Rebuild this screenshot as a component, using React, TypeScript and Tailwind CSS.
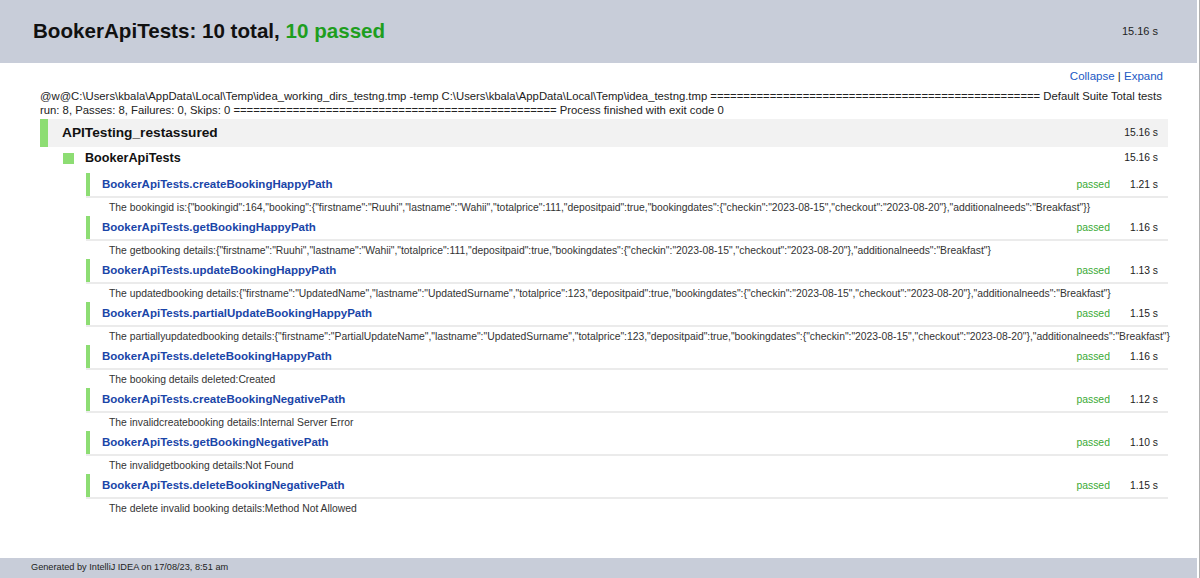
const tests = [
  {
    name: "BookerApiTests.createBookingHappyPath",
    time: "1.21 s",
    msg: 'The bookingid is:{"bookingid":164,"booking":{"firstname":"Ruuhi","lastname":"Wahii","totalprice":111,"depositpaid":true,"bookingdates":{"checkin":"2023-08-15","checkout":"2023-08-20"},"additionalneeds":"Breakfast"}}',
  },
  {
    name: "BookerApiTests.getBookingHappyPath",
    time: "1.16 s",
    msg: 'The getbooking details:{"firstname":"Ruuhi","lastname":"Wahii","totalprice":111,"depositpaid":true,"bookingdates":{"checkin":"2023-08-15","checkout":"2023-08-20"},"additionalneeds":"Breakfast"}',
  },
  {
    name: "BookerApiTests.updateBookingHappyPath",
    time: "1.13 s",
    msg: 'The updatedbooking details:{"firstname":"UpdatedName","lastname":"UpdatedSurname","totalprice":123,"depositpaid":true,"bookingdates":{"checkin":"2023-08-15","checkout":"2023-08-20"},"additionalneeds":"Breakfast"}',
  },
  {
    name: "BookerApiTests.partialUpdateBookingHappyPath",
    time: "1.15 s",
    msg: 'The partiallyupdatedbooking details:{"firstname":"PartialUpdateName","lastname":"UpdatedSurname","totalprice":123,"depositpaid":true,"bookingdates":{"checkin":"2023-08-15","checkout":"2023-08-20"},"additionalneeds":"Breakfast"}',
  },
  {
    name: "BookerApiTests.deleteBookingHappyPath",
    time: "1.16 s",
    msg: "The booking details deleted:Created",
  },
  {
    name: "BookerApiTests.createBookingNegativePath",
    time: "1.12 s",
    msg: "The invalidcreatebooking details:Internal Server Error",
  },
  {
    name: "BookerApiTests.getBookingNegativePath",
    time: "1.10 s",
    msg: "The invalidgetbooking details:Not Found",
  },
  {
    name: "BookerApiTests.deleteBookingNegativePath",
    time: "1.15 s",
    msg: "The delete invalid booking details:Method Not Allowed",
  },
];

function TestRow({ name, time, msg }: { name: string; time: string; msg: string }) {
  return (
    <div>
      <div className="flex h-[25px] items-stretch border-b-2 border-[#ebebeb]">
        <div className="w-[4px] bg-[#8ddd73]" />
        <span className="ml-[12px] self-center text-[11.5px] font-bold text-[#1a45a8]">{name}</span>
        <span className="ml-auto self-center text-[10.4px] text-[#3aaa35]">passed</span>
        <span className="ml-[20px] mr-[10px] self-center text-[10.3px] text-[#222]">{time}</span>
      </div>
      <div className="h-[18px] whitespace-nowrap pl-[23px] pt-[3px] text-[10.35px] leading-[14px] text-[#333]">
        {msg}
      </div>
    </div>
  );
}

export default function App() {
  return (
    <div
      className="flex h-[578px] w-[1200px] overflow-hidden bg-white text-[#222]"
      style={{ fontFamily: '"Liberation Sans", Arial, sans-serif' }}
    >
      <div className="flex w-[1197px] flex-col">
        <header className="flex h-[63px] shrink-0 items-center justify-between bg-[#c8cdd9] pl-[33px] pr-[39px]">
          <h1 className="text-[20.6px] font-bold text-[#111]">
            BookerApiTests: 10 total, <span className="text-[#1e9e1e]">10 passed</span>
          </h1>
          <span className="text-[11px] text-[#222]">15.16 s</span>
        </header>

        <main className="flex-1 pl-[40px] pr-[29px]">
          <div className="mt-[5px] h-[16px] pr-[5px] text-right text-[11.5px] leading-[16px] text-[#2159c4]">
            Collapse <span className="text-[#222]">|</span> Expand
          </div>
          <p className="mt-[5px] text-[11.3px] leading-[14px] text-[#222]">
            @w@C:\Users\kbala\AppData\Local\Temp\idea_working_dirs_testng.tmp -temp C:\Users\kbala\AppData\Local\Temp\idea_testng.tmp ================================================== Default Suite Total tests run: 8, Passes: 8, Failures: 0, Skips: 0 ================================================= Process finished with exit code 0
          </p>

          <div className="mt-[2px] flex h-[28px] items-stretch bg-[#f2f2f2]">
            <div className="w-[8px] bg-[#8ddd73]" />
            <span className="ml-[14px] self-center text-[13.7px] font-bold text-[#111]">APITesting_restassured</span>
            <span className="ml-auto mr-[10px] self-center text-[10.3px]">15.16 s</span>
          </div>

          <div className="flex h-[22px] items-center">
            <div className="ml-[23px] h-[11px] w-[11px] bg-[#8ddd73]" />
            <span className="ml-[11px] text-[12.6px] font-bold text-[#111]">BookerApiTests</span>
            <span className="ml-auto mr-[10px] text-[10.3px]">15.16 s</span>
          </div>

          <div className="mt-[4px] pl-[46px]">
            {tests.map((t) => (
              <TestRow key={t.name} {...t} />
            ))}
          </div>
        </main>

        <footer className="flex h-[20px] shrink-0 items-center bg-[#c8cdd9] pl-[31px] text-[9.2px] text-[#222]">
          Generated by IntelliJ IDEA on 17/08/23, 8:51 am
        </footer>
      </div>
      <div className="w-[2px]" />
      <div className="w-[1px] bg-[#b0b0b0]" />
    </div>
  );
}
